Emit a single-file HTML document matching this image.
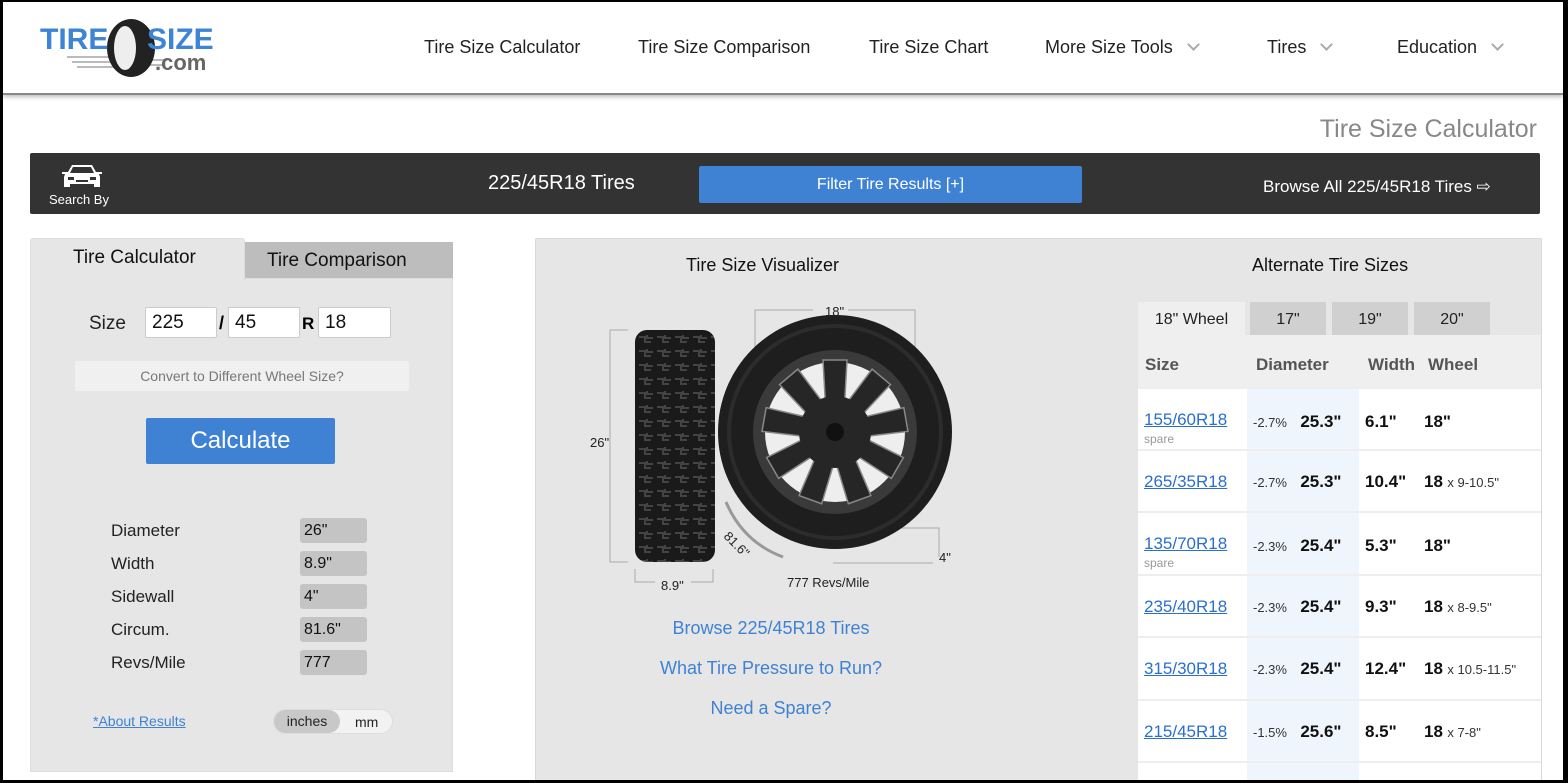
<!DOCTYPE html>
<html><head><meta charset="utf-8"><style>
*{box-sizing:border-box;margin:0;padding:0}
body{width:1568px;height:783px;overflow:hidden;font-family:"Liberation Sans",Arial,sans-serif;background:#000;position:relative}
.page{position:absolute;left:3px;top:2px;width:1560px;height:778px;background:#fff;overflow:hidden}
.abs{position:absolute}
.nav{font-size:18px;color:#222;top:35px}
.chev{display:inline-block;width:9px;height:9px;border-right:2px solid #aaa;border-bottom:2px solid #aaa;transform:rotate(45deg);margin-left:16px;position:relative;top:-4px}
.lbl{font-size:17px;color:#222}
.val{background:#c4c4c4;border-radius:3px;width:67px;height:25px;font-size:16px;padding:4px 4px;color:#111}
.inp{background:#fff;border:1px solid #ccc;border-radius:2px;height:31px;font-size:19px;padding:4px 6px;color:#111}
table{border-collapse:collapse}
td{border-top:2px solid #eee;vertical-align:top}
.lnk{color:#2a6fce;text-decoration:underline;font-size:17px}
.sp{font-size:12px;color:#999}
.pct{font-size:13px;color:#333}
.b{font-weight:bold;font-size:17px;color:#111}
</style></head><body><div class="page">
<div class="abs" style="left:0;top:0;width:1560px;height:93px;background:#fff;border-bottom:2px solid #888;box-shadow:0 2px 4px rgba(0,0,0,.25)"></div>
<svg class="abs" style="left:34px;top:10px" width="190" height="66" viewBox="0 0 190 66">
<g stroke="#bbb" stroke-width="2"><line x1="30" y1="45" x2="80" y2="45"/><line x1="35" y1="50" x2="80" y2="50"/><line x1="40" y1="55" x2="80" y2="55"/><line x1="110" y1="48" x2="130" y2="48"/><line x1="110" y1="53" x2="128" y2="53"/></g>
<ellipse cx="94" cy="36" rx="24" ry="29" fill="#222"/><ellipse cx="88" cy="36" rx="11" ry="22" fill="#eee"/>
<text x="3" y="37" font-family="Liberation Sans" font-weight="bold" font-size="30" fill="#3d84d6">TIRE</text>
<text x="110" y="37" font-family="Liberation Sans" font-weight="bold" font-size="30" fill="#3d84d6">SIZE</text>
<text x="118" y="58" font-family="Liberation Sans" font-weight="bold" font-size="22" fill="#666">.com</text>
</svg>
<div class="abs nav" style="left:421px">Tire Size Calculator</div>
<div class="abs nav" style="left:635px">Tire Size Comparison</div>
<div class="abs nav" style="left:866px">Tire Size Chart</div>
<div class="abs nav" style="left:1042px">More Size Tools<span class="chev"></span></div>
<div class="abs nav" style="left:1264px">Tires<span class="chev"></span></div>
<div class="abs nav" style="left:1394px">Education<span class="chev"></span></div>
<div class="abs" style="right:26px;top:113px;font-size:25px;color:#888">Tire Size Calculator</div>
<div class="abs" style="left:27px;top:151px;width:1510px;height:61px;background:#333;border-radius:2px"></div>
<svg class="abs" style="left:57px;top:161px" width="44" height="26" viewBox="0 0 44 26"><path d="M8 9 L12 2 H32 L36 9 H42 V11 H39 L40 14 V24 H34 V21 H10 V24 H4 V14 L5 11 H2 V9 Z" fill="#fff"/><path d="M13 4 H31 L34 10 H10 Z" fill="#333"/><rect x="8" y="14" width="6" height="3" fill="#333"/><rect x="30" y="14" width="6" height="3" fill="#333"/><rect x="16" y="17" width="12" height="2" fill="#333"/></svg>
<div class="abs" style="left:46px;top:190px;color:#fff;font-size:13px">Search By</div>
<div class="abs" style="left:485px;top:170px;color:#fff;font-size:20px">225/45R18 Tires</div>
<div class="abs" style="left:696px;top:164px;width:383px;height:37px;background:#3f82d4;border-radius:2px;color:#fff;font-size:16px;text-align:center;line-height:37px">Filter Tire Results [+]</div>
<div class="abs" style="left:1260px;top:175px;color:#fff;font-size:17px">Browse All 225/45R18 Tires ⇨</div>
<div class="abs" style="left:27px;top:276px;width:423px;height:494px;background:#e6e6e6;border:1px solid #ddd"></div>
<div class="abs" style="left:27px;top:236px;width:215px;height:42px;background:#e6e6e6;border:1px solid #ddd;border-bottom:none;border-radius:3px 3px 0 0;font-size:19px;color:#111;padding:8px 0 0 42px">Tire Calculator</div>
<div class="abs" style="left:242px;top:240px;width:208px;height:36px;background:#bdbdbd;font-size:19px;color:#111;padding:8px 0 0 22px">Tire Comparison</div>
<div class="abs lbl" style="left:86px;top:311px;font-size:19px">Size</div>
<div class="abs inp" style="left:142px;top:305px;width:72px">225</div>
<div class="abs" style="left:216px;top:311px;font-size:18px;font-weight:bold">/</div>
<div class="abs inp" style="left:225px;top:305px;width:72px">45</div>
<div class="abs" style="left:299px;top:312px;font-size:17px;font-weight:bold">R</div>
<div class="abs inp" style="left:315px;top:305px;width:73px">18</div>
<div class="abs" style="left:72px;top:359px;width:334px;height:30px;background:#f0f0f0;border-radius:2px;font-size:14px;color:#777;text-align:center;line-height:30px">Convert to Different Wheel Size?</div>
<div class="abs" style="left:143px;top:416px;width:189px;height:46px;background:#3f82d4;border-radius:2px;color:#fff;font-size:24px;text-align:center;line-height:46px">Calculate</div>
<div class="abs lbl" style="left:108px;top:519px">Diameter</div><div class="abs val" style="left:297px;top:516px">26"</div>
<div class="abs lbl" style="left:108px;top:552px">Width</div><div class="abs val" style="left:297px;top:549px">8.9"</div>
<div class="abs lbl" style="left:108px;top:585px">Sidewall</div><div class="abs val" style="left:297px;top:582px">4"</div>
<div class="abs lbl" style="left:108px;top:618px">Circum.</div><div class="abs val" style="left:297px;top:615px">81.6"</div>
<div class="abs lbl" style="left:108px;top:651px">Revs/Mile</div><div class="abs val" style="left:297px;top:648px">777</div>
<div class="abs" style="left:90px;top:711px;font-size:14px;color:#3f82d4;text-decoration:underline">*About Results</div>
<div class="abs" style="left:270px;top:707px;width:120px;height:25px;background:#f2f2f2;border:1px solid #ddd;border-radius:13px"></div>
<div class="abs" style="left:271px;top:708px;width:66px;height:23px;background:#c8c8c8;border-radius:12px;font-size:14px;text-align:center;line-height:23px;color:#222">inches</div>
<div class="abs" style="left:352px;top:712px;font-size:14px;color:#222">mm</div>
<div class="abs" style="left:532px;top:236px;width:1007px;height:560px;background:#e6e6e6;border:1px solid #d8d8d8;border-radius:2px"></div>
<div class="abs" style="left:683px;top:253px;font-size:18px;color:#111">Tire Size Visualizer</div>
<div class="abs" style="left:1249px;top:253px;font-size:18px;color:#111">Alternate Tire Sizes</div>
<svg class="abs" style="left:580px;top:290px" width="380" height="300" viewBox="0 0 380 300">
<g stroke="#aaa" stroke-width="1" fill="none">
<path d="M45 38 H27 V270 H45"/><path d="M52 277 V290 H72 M108 290 H130 V277"/>
<path d="M172 120 V18 H230 M265 18 H332 V120"/><path d="M250 236 H356 V265"/><path d="M250 271 H350"/>
</g>
<defs><pattern id="tr" width="18" height="14" patternUnits="userSpaceOnUse"><rect width="18" height="14" fill="#1a1a1a"/><path d="M2 3 H8 V8 H14 M10 1 V4 H16" stroke="#444" stroke-width="2" fill="none"/></pattern></defs>
<rect x="52" y="38" width="80" height="232" rx="12" fill="url(#tr)"/>
<circle cx="252" cy="140" r="117" fill="#1e1e1e"/>
<circle cx="252" cy="140" r="106" fill="none" stroke="#2c2c2c" stroke-width="4"/>
<circle cx="252" cy="140" r="82" fill="#3a3a3a"/>
<circle cx="252" cy="140" r="70" fill="#eeeeee"/>
<g fill="#262626" stroke="#888" stroke-width="1.5">
<g id="sp"><path d="M244 140 L240 68 H264 L260 140 Z"/></g>
<use href="#sp" transform="rotate(40 252 140)"/><use href="#sp" transform="rotate(80 252 140)"/><use href="#sp" transform="rotate(120 252 140)"/><use href="#sp" transform="rotate(160 252 140)"/><use href="#sp" transform="rotate(200 252 140)"/><use href="#sp" transform="rotate(240 252 140)"/><use href="#sp" transform="rotate(280 252 140)"/><use href="#sp" transform="rotate(320 252 140)"/>
</g>
<circle cx="252" cy="140" r="36" fill="#262626"/><circle cx="252" cy="140" r="9" fill="#111"/>
<path d="M143 210 Q160 250 200 265" stroke="#999" stroke-width="3" fill="none"/>
<text x="7" y="155" font-family="Liberation Sans" font-size="13" fill="#222">26"</text>
<text x="78" y="298" font-family="Liberation Sans" font-size="13" fill="#222">8.9"</text>
<text x="242" y="24" font-family="Liberation Sans" font-size="13" fill="#222">18"</text>
<text x="356" y="270" font-family="Liberation Sans" font-size="13" fill="#222">4"</text>
<text x="204" y="295" font-family="Liberation Sans" font-size="13" fill="#222">777 Revs/Mile</text>
<text x="140" y="245" font-family="Liberation Sans" font-size="13" fill="#222" transform="rotate(45 140 245)">81.6"</text>
</svg>
<div class="abs" style="left:533px;top:606px;width:470px;text-align:center;font-size:18px;color:#3f82d4;line-height:40px">Browse 225/45R18 Tires<br>What Tire Pressure to Run?<br>Need a Spare?</div>
<div class="abs" style="left:1135px;top:300px;width:107px;height:35px;background:#efefef;font-size:16px;color:#222;text-align:center;line-height:35px">18" Wheel</div>
<div class="abs" style="left:1247px;top:300px;width:76px;height:33px;background:#d0d0d0;font-size:16px;color:#222;text-align:center;line-height:35px">17"</div>
<div class="abs" style="left:1329px;top:300px;width:76px;height:33px;background:#d0d0d0;font-size:16px;color:#222;text-align:center;line-height:35px">19"</div>
<div class="abs" style="left:1411px;top:300px;width:76px;height:33px;background:#d0d0d0;font-size:16px;color:#222;text-align:center;line-height:35px">20"</div>
<div class="abs" style="left:1135px;top:333px;width:403px;height:52px;background:#efefef;font-size:17px;font-weight:bold;color:#555">
<span class="abs" style="left:7px;top:20px">Size</span><span class="abs" style="left:118px;top:20px">Diameter</span><span class="abs" style="left:230px;top:20px">Width</span><span class="abs" style="left:290px;top:20px">Wheel</span></div>
<table class="abs" style="left:1135px;top:385px;width:403px;background:#fff">
<colgroup><col style="width:109px"><col style="width:112px"><col style="width:59px"><col></colgroup>
<tr style="height:62px"><td style="padding:21px 0 0 6px"><span class="lnk">155/60R18</span><br><span class="sp">spare</span></td><td style="background:#eef5fc;padding:23px 0 0 6px"><span class="pct">-2.7%</span>&nbsp;&nbsp; <span class="b">25.3"</span></td><td style="padding:23px 0 0 6px" class="b">6.1"</td><td style="padding:23px 0 0 6px" class="b">18"</td></tr>
<tr style="height:62px"><td style="padding:21px 0 0 6px"><span class="lnk">265/35R18</span></td><td style="background:#eef5fc;padding:21px 0 0 6px"><span class="pct">-2.7%</span>&nbsp;&nbsp; <span class="b">25.3"</span></td><td style="padding:21px 0 0 6px" class="b">10.4"</td><td style="padding:21px 0 0 6px"><span class="b">18</span> <span class="pct">x 9-10.5"</span></td></tr>
<tr style="height:63px"><td style="padding:21px 0 0 6px"><span class="lnk">135/70R18</span><br><span class="sp">spare</span></td><td style="background:#eef5fc;padding:23px 0 0 6px"><span class="pct">-2.3%</span>&nbsp;&nbsp; <span class="b">25.4"</span></td><td style="padding:23px 0 0 6px" class="b">5.3"</td><td style="padding:23px 0 0 6px" class="b">18"</td></tr>
<tr style="height:62px"><td style="padding:21px 0 0 6px"><span class="lnk">235/40R18</span></td><td style="background:#eef5fc;padding:21px 0 0 6px"><span class="pct">-2.3%</span>&nbsp;&nbsp; <span class="b">25.4"</span></td><td style="padding:21px 0 0 6px" class="b">9.3"</td><td style="padding:21px 0 0 6px"><span class="b">18</span> <span class="pct">x 8-9.5"</span></td></tr>
<tr style="height:63px"><td style="padding:21px 0 0 6px"><span class="lnk">315/30R18</span></td><td style="background:#eef5fc;padding:21px 0 0 6px"><span class="pct">-2.3%</span>&nbsp;&nbsp; <span class="b">25.4"</span></td><td style="padding:21px 0 0 6px" class="b">12.4"</td><td style="padding:21px 0 0 6px"><span class="b">18</span> <span class="pct">x 10.5-11.5"</span></td></tr>
<tr style="height:62px"><td style="padding:21px 0 0 6px"><span class="lnk">215/45R18</span></td><td style="background:#eef5fc;padding:21px 0 0 6px"><span class="pct">-1.5%</span>&nbsp;&nbsp; <span class="b">25.6"</span></td><td style="padding:21px 0 0 6px" class="b">8.5"</td><td style="padding:21px 0 0 6px"><span class="b">18</span> <span class="pct">x 7-8"</span></td></tr>
<tr style="height:40px"><td></td><td style="background:#eef5fc"></td><td></td><td></td></tr>
</table>
</div></body></html>
